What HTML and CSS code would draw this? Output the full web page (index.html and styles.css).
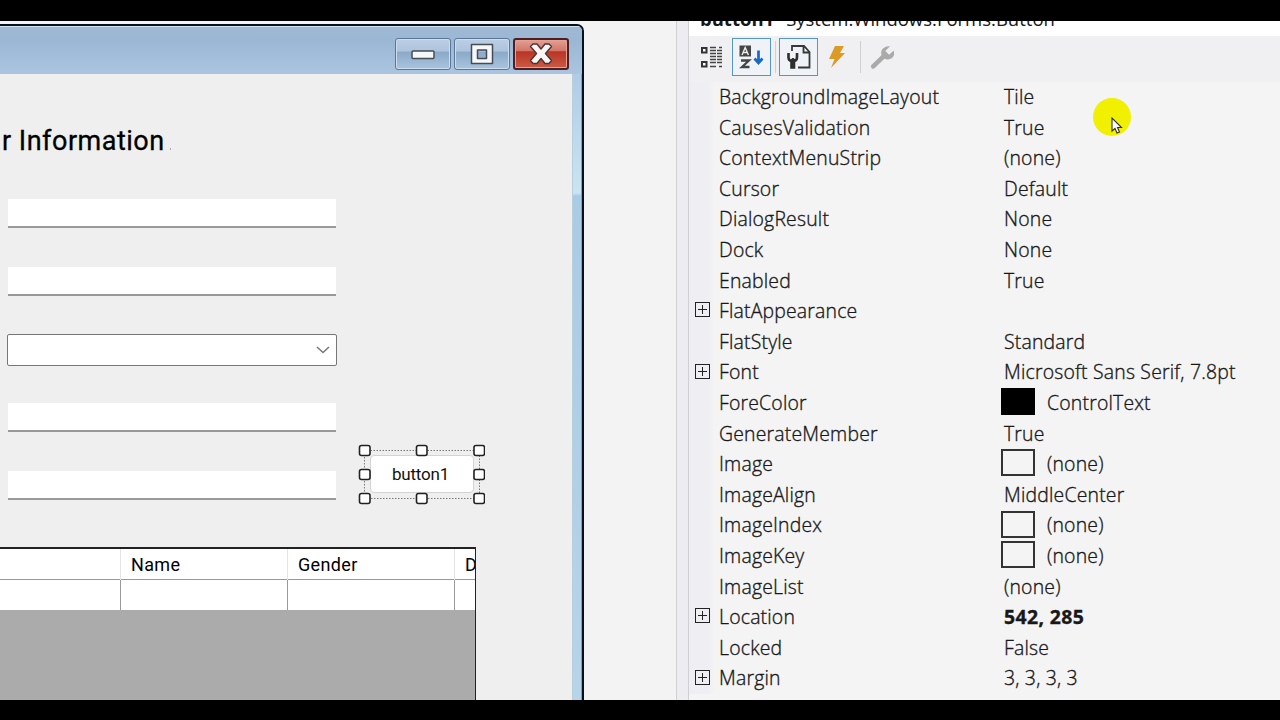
FILE: index.html
```html
<!DOCTYPE html>
<html lang="en">
<head>
<meta charset="utf-8">
<title>Form designer</title>
<link rel="stylesheet" href="styles.css">
</head>
<body>
<div class="screen">
  <main class="designer">
    <section class="window">
      <header class="titlebar">
        <div class="caption"><svg width="26" height="14" viewBox="0 0 26 14"><rect x="2" y="4" width="22" height="7.500" rx="1" fill="#f5f7f8" stroke="#454c54" stroke-width="1.500"/></svg></div>
        <div class="caption"><svg width="26" height="24" viewBox="0 0 26 24"><path fill-rule="evenodd" d="M2.500 2.500h21v19h-21zM8.500 8v8.500h9V8z" fill="#f5f7f8" stroke="#454c54" stroke-width="1.500" stroke-linejoin="round"/></svg></div>
        <div class="caption close"><svg width="26" height="24" viewBox="0 0 26 24"><path d="M5 2h4l4 5 4-5h4l2.500 2.500-6 7 6 7-2.500 3h-4l-4-5-4 5H5l-2.500-3 6-7-6-7z" fill="#f8f5f4" stroke="#4c3434" stroke-width="1.400" stroke-linejoin="round"/></svg></div>
      </header>
      <div class="frame">
        <div class="client">
          <h1 class="heading">r Information<span class="speck"></span></h1>
          <div class="fields">
            <div class="field"></div>
            <div class="field"></div>
            <div class="combo"><svg width="16" height="10" viewBox="0 0 16 10"><path d="M2 2l6 5.500L14 2" fill="none" stroke="#777" stroke-width="1.500"/></svg></div>
            <div class="field"></div>
            <div class="field"></div>
          </div>
          <div class="selection">
            <div class="button">button1</div>
            <svg class="handles" width="128" height="62" viewBox="0 0 128 62">
              <rect x="7.500" y="7.500" width="115" height="48" fill="none" stroke="#777" stroke-dasharray="1.500 1.500"/>
              <g fill="#fff" stroke="#222" stroke-width="1.600">
                <rect x="2.500" y="2.500" width="10.500" height="10" rx="2"/><rect x="59.500" y="2.500" width="10.500" height="10" rx="2"/><rect x="117" y="2.500" width="10.500" height="10" rx="2"/>
                <rect x="2.500" y="26.500" width="10.500" height="10" rx="2"/><rect x="117" y="26.500" width="10.500" height="10" rx="2"/>
                <rect x="2.500" y="50.500" width="10.500" height="10" rx="2"/><rect x="59.500" y="50.500" width="10.500" height="10" rx="2"/><rect x="117" y="50.500" width="10.500" height="10" rx="2"/>
              </g>
            </svg>
          </div>
          <div class="datagrid">
            <div class="cells head"><div></div><div>Name</div><div>Gender</div><div>D</div></div>
            <div class="cells"><div></div><div></div><div></div><div></div></div>
          </div>
        </div>
        <div class="edge"></div>
      </div>
    </section>
  </main>
  <div class="splitter"></div>
  <aside class="props">
    <div class="object"><b>button1</b><span>System.Windows.Forms.Button</span></div>
    <div class="toolbar">
      <div class="tool"><svg width="26" height="26" viewBox="0 0 26 26"><g fill="#fff" stroke="#333" stroke-width="2"><rect x="3" y="4" width="4.500" height="4.500"/><rect x="3" y="18" width="4.500" height="4.500"/></g><path d="M11 3.500h7M11 6.500h12M11 9.500h12M11 12.500h12M11 15.500h12M11 18.500h12M11 22.500h7M20 3.500h3M20 22.500h3" stroke="#444" stroke-width="1.400" stroke-dasharray="6 1"/></svg></div>
      <div class="tool on"><svg width="30" height="30" viewBox="0 0 30 30"><rect x="2.500" y="3.500" width="11.500" height="11" fill="#444"/><path d="M5 13l3.200-7.500 3.200 7.500M6 10.500h4.500" fill="none" stroke="#eee" stroke-width="1.400"/><path d="M4 18.500h8l-7 6.500h7.500" fill="none" stroke="#444" stroke-width="2.300"/><path d="M21.500 8.500v12M17.500 16.500l4 4.500 4-4.500" fill="none" stroke="#1769c4" stroke-width="2.700"/></svg></div>
      <div class="rule"></div>
      <div class="tool on"><svg width="30" height="30" viewBox="0 0 30 30"><path d="M8 9V4h12l5.500 6v15.500H14M19.500 4v6.500h6" fill="none" stroke="#383838" stroke-width="1.800"/><path d="M4.500 11v4.500q0 3 3 3.500v6.500h2.500V19q3-.500 3-3.500V11M7.500 17l1.500 1 1.500-1" fill="none" stroke="#2e2e2e" stroke-width="2.600"/></svg></div>
      <div class="tool bolt"><svg width="26" height="28" viewBox="0 0 26 28"><path d="M11 3h9l-4 7h5L7 25l3.500-9H5z" fill="#dc9b27"/></svg></div>
      <div class="rule late"></div>
      <div class="tool wrench"><svg width="30" height="28" viewBox="0 0 30 28"><path d="M4.500 24L17 12" stroke="#aaa" stroke-width="5" stroke-linecap="round"/><path d="M22.500 2.500l-5 5 4 4 5-4.500q2 8-5 9.500-3 .5-5-1l-3-3.500q-1.500-4 1.500-7 3-3 7.500-2.500z" fill="#aaa"/></svg></div>
    </div>
    <div class="grid">
      <div class="row"><i></i><span>BackgroundImageLayout</span><span>Tile</span></div>
      <div class="row"><i></i><span>CausesValidation</span><span>True</span></div>
      <div class="row"><i></i><span>ContextMenuStrip</span><span>(none)</span></div>
      <div class="row"><i></i><span>Cursor</span><span>Default</span></div>
      <div class="row"><i></i><span>DialogResult</span><span>None</span></div>
      <div class="row"><i></i><span>Dock</span><span>None</span></div>
      <div class="row"><i></i><span>Enabled</span><span>True</span></div>
      <div class="row"><i class="plus"></i><span>FlatAppearance</span><span></span></div>
      <div class="row"><i></i><span>FlatStyle</span><span>Standard</span></div>
      <div class="row"><i class="plus"></i><span>Font</span><span>Microsoft Sans Serif, 7.8pt</span></div>
      <div class="row"><i></i><span>ForeColor</span><span class="val"><em class="swatch black"></em>ControlText</span></div>
      <div class="row"><i></i><span>GenerateMember</span><span>True</span></div>
      <div class="row"><i></i><span>Image</span><span class="val"><em class="swatch"></em>(none)</span></div>
      <div class="row"><i></i><span>ImageAlign</span><span>MiddleCenter</span></div>
      <div class="row"><i></i><span>ImageIndex</span><span class="val"><em class="swatch"></em>(none)</span></div>
      <div class="row"><i></i><span>ImageKey</span><span class="val"><em class="swatch"></em>(none)</span></div>
      <div class="row"><i></i><span>ImageList</span><span>(none)</span></div>
      <div class="row"><i class="plus"></i><span>Location</span><span class="bold">542, 285</span></div>
      <div class="row"><i></i><span>Locked</span><span>False</span></div>
      <div class="row"><i class="plus"></i><span>Margin</span><span>3, 3, 3, 3</span></div>
    </div>
  </aside>
  <div class="pointer"><svg width="12" height="18" viewBox="0 0 12 18"><path d="M1 1v13l3-2.500 2 4.500 2.500-1-2-4.500h4z" fill="#fff" stroke="#333" stroke-width="1.100"/></svg></div>
</div>
</body>
</html>
```

FILE: styles.css
```css
* { box-sizing: border-box; }
body { margin: 0; background: #000; }
.screen { position: relative; width: 1280px; height: 720px; display: flex; border: solid #000; border-width: 21px 0 20px; background: #f3f3f4; overflow: hidden; }
.designer { width: 676px; padding-top: 3px; background: #f3f3f3; }
.window { width: 584px; height: 676px; display: flex; flex-direction: column; border: solid #07101c; border-width: 2px 2px 0 0; border-radius: 0 7px 0 0; background: #a9c4df; overflow: hidden; }
.titlebar { height: 48px; flex: none; display: flex; justify-content: flex-end; align-items: flex-start; gap: 3px; padding: 12px 13px 0 0; background: linear-gradient(#a0b9d3, #9bb7d4 30%, #abc5e0); box-shadow: inset 0 1px #d3e2f0; }
.caption { width: 56px; height: 32px; display: flex; align-items: center; justify-content: center; border: 1px solid #5b7798; border-radius: 3px; background: linear-gradient(#bccfe3, #adc4dc 40%, #8ba9c8 44%, #a9c4df); box-shadow: inset 0 0 0 1px #cddded; }
.close { border: 2px solid #4a2025; background: linear-gradient(#e3a093, #d2766a 38%, #b93526 42%, #cb5a45); box-shadow: inset 0 0 0 1px #e5a294; }
.frame { flex: 1; display: flex; min-height: 0; }
.client { position: relative; width: 572px; background: #efefef; display: flex; flex-direction: column; align-items: flex-start; }
.edge { flex: 1; background: linear-gradient(#b0cce5, #cbe4f3 119px, #a9cbe3 122px, #b7d4e9 100%); border-right: 1px solid #6caac7; border-left: 1px solid #b8cfe0; }
.heading { display: flex; align-items: flex-end; margin: 50px 0 0 2px; height: 34px; font: 400 27px/34px Roboto, "Liberation Sans", sans-serif; letter-spacing: .5px; color: #000; white-space: pre; -webkit-text-stroke: .3px #000; }
.speck { width: 1px; height: 2px; margin: 0 0 8px 5px; background: #aaa; }
.fields { display: flex; flex-direction: column; margin: 41px 0 0 7px; }
.field { width: 328px; height: 29px; margin: 0 0 39px 1px; background: #fff; border-bottom: 2px solid #999; }
.combo { width: 330px; height: 32px; margin: -1px 0 37px; display: flex; align-items: center; justify-content: flex-end; padding-right: 5px; border: 1px solid #777; border-radius: 2px; background: #fff; }
.selection { position: absolute; left: 357px; top: 369px; width: 128px; height: 62px; padding: 12px 11px 12px 13px; }
.button { height: 38px; font: 17px/37px Roboto, "Liberation Sans", sans-serif; letter-spacing: -.2px; text-align: center; color: #111; background: #fff; border: 1px solid #d3d3d3; border-radius: 4px; padding-right: 3px; }
.handles { position: absolute; left: 0; top: 0; }
.datagrid { width: 476px; height: 160px; margin-top: 8px; border: solid #222; border-width: 2px 1px 0 0; background: #ababab; overflow: hidden; }
.cells { display: grid; grid-template-columns: 121px 167px 167px 20px; height: 31px; background: #fff; border-bottom: 1px solid #999; }
.cells + .cells { border-bottom-color: #ababab; }
.cells div { border-right: 1px solid #999; }
.cells div:last-child { border-right: 0; }
.head { height: 31px; font: 18px/31px Roboto, "Liberation Sans", sans-serif; letter-spacing: .35px; }
.head div { padding-left: 10px; border-color: #e4e4e4 !important; }
.splitter { width: 13px; border: solid #cfcfd4; border-width: 0 1px; background: #ededf1; }
.props { flex: 1; min-width: 0; background: #f4f4f5; font-family: "Open Sans", "Noto Sans", sans-serif; color: #181818; }
.object { height: 15px; padding-left: 11px; display: flex; align-items: flex-end; gap: 12px; background: #fff; font-size: 18.5px; line-height: 28px; overflow: hidden; white-space: pre; }
.object b, .object span { margin-bottom: 3px; }
.toolbar { display: flex; align-items: center; height: 46px; padding: 0 0 4px 9px; background: #f0f0f3; }
.tool { width: 28px; height: 38px; display: flex; align-items: center; justify-content: center; }
.on { width: 39px; border: 1px solid #5596c4; background: #eff3f8; margin-left: 6px; }
.rule { width: 1px; height: 32px; margin-left: 4px; background: #d0d0d4; }
.rule + .on { margin-left: 3px; }
.bolt { margin-left: 5px; }
.late { margin-left: 9px; }
.wrench { margin-left: 8px; }
.grid { background: linear-gradient(90deg, #eeeef3 18px, #f4f4f5 26px); }
.row { display: grid; grid-template-columns: 30px 285px 1fr; align-items: center; height: 30.6px; font-size: 19.4px; line-height: 30.6px; letter-spacing: .2px; font-weight: 300; white-space: pre; -webkit-text-stroke: .35px #181818; }
.plus { width: 15px; height: 15px; margin: -3px 0 0 6px; border: 1.5px solid #222; background: linear-gradient(#222, #222) center / 9px 1px no-repeat, linear-gradient(#222, #222) center / 1px 9px no-repeat; }
.val { display: flex; align-items: center; margin-left: -3px; }
.swatch { width: 34px; height: 27px; margin-right: 12px; border: 2px solid #333; margin-top: -3px; }
.black { background: #000; border-color: #000; }
.bold { font-weight: 700; letter-spacing: .4px; }
.pointer { position: absolute; left: 1093px; top: 77px; width: 38px; height: 38px; border-radius: 50%; background: #f0f000; padding: 19px 0 0 18px; }
```
